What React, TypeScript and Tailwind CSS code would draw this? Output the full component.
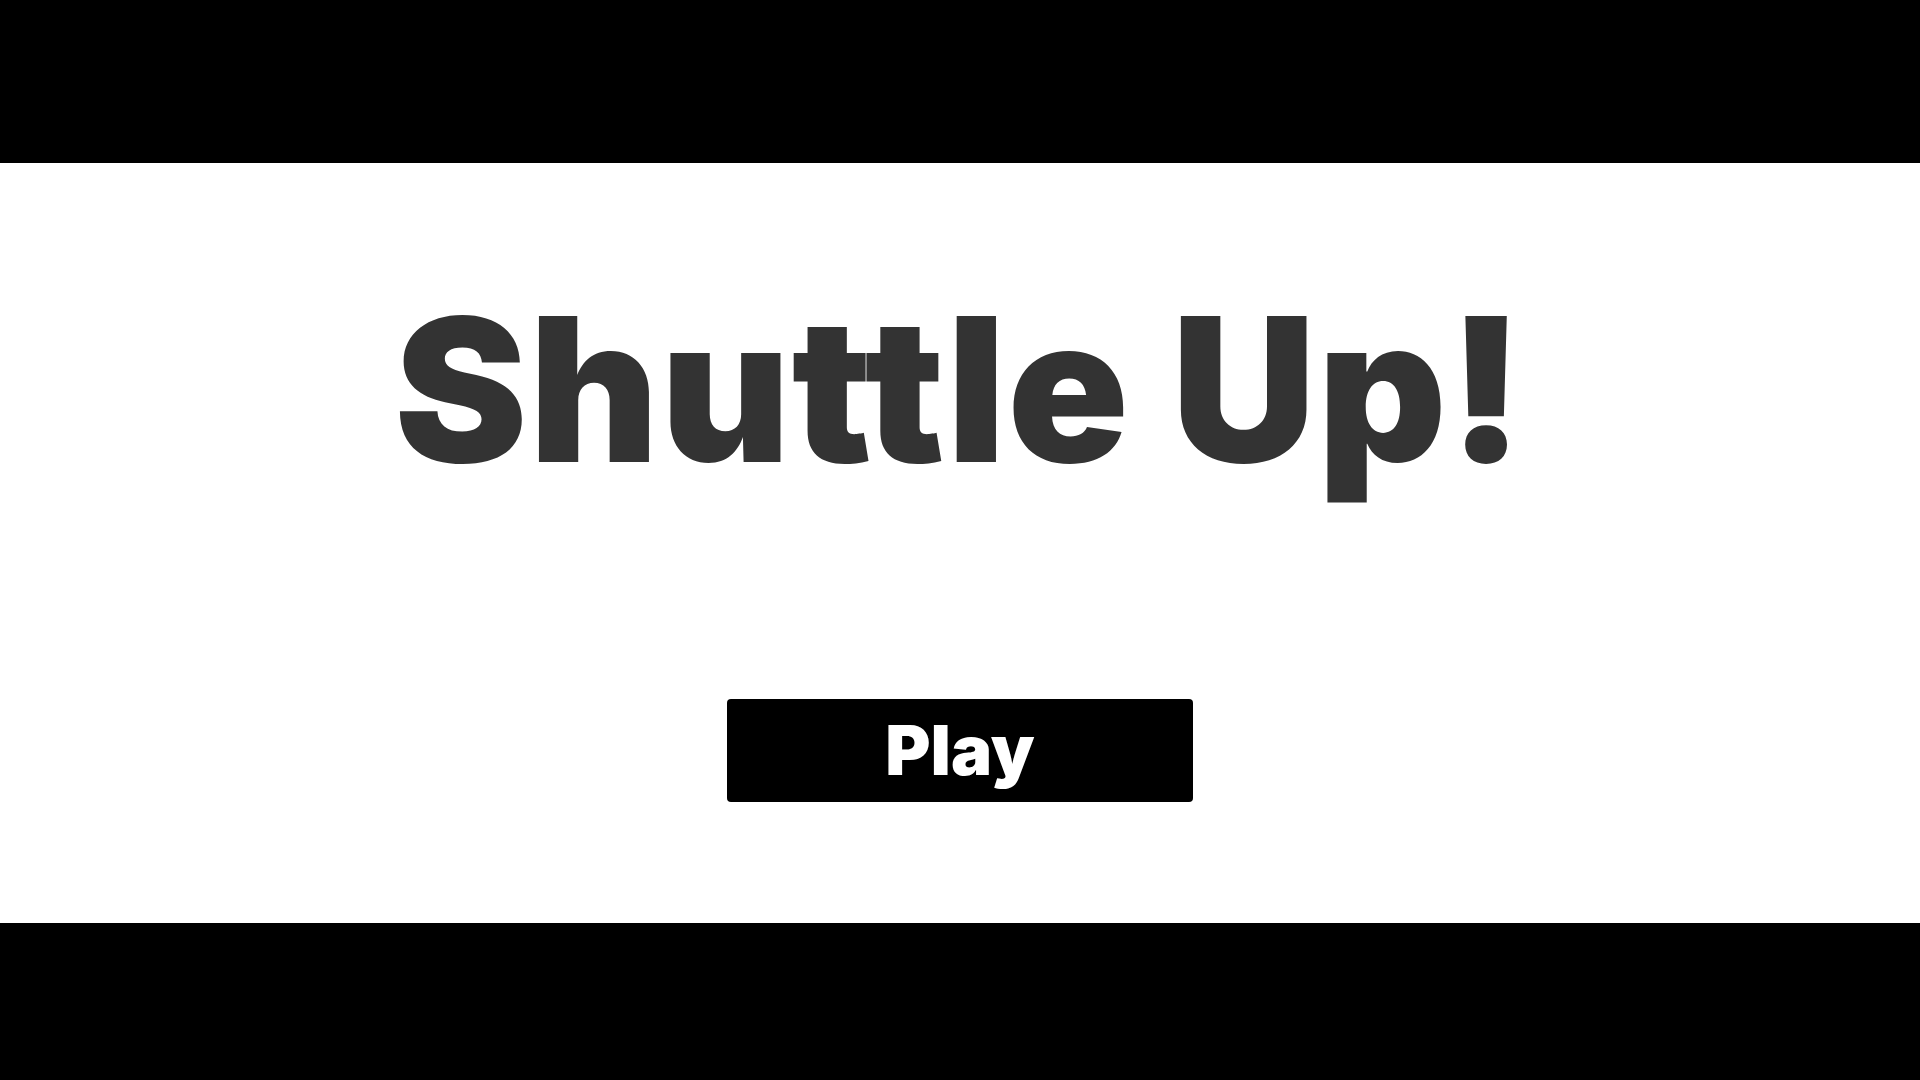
export default function App() {
  return (
    <div className="flex h-screen w-full flex-col bg-black">
      {/* letterbox bar */}
      <div className="h-[163px] shrink-0 bg-black" />

      <main className="flex h-[760px] shrink-0 flex-col items-center bg-white">
        <h1
          className="mt-[126px] text-[200px] font-black leading-none tracking-[1.5px] text-[#333333]"
          style={{ fontFamily: "Inter, 'Noto Sans', sans-serif" }}
        >
          Shuttle Up!
        </h1>
        <button
          className="mt-[210px] flex h-[103px] w-[466px] items-center justify-center rounded-[4px] bg-black text-[69px] font-black leading-none text-white"
          style={{ fontFamily: "Inter, 'Noto Sans', sans-serif" }}
        >
          Play
        </button>
      </main>

      <div className="flex-1 bg-black" />
    </div>
  );
}
